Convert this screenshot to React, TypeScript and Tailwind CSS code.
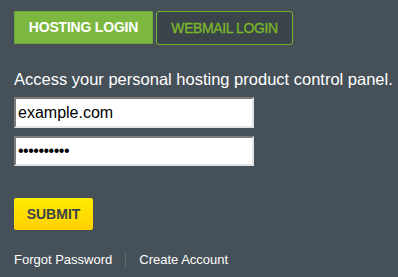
export default function App() {
  return (
    <div
      className="w-[398px] h-[277px] bg-[#465058] px-[14px] pt-[11px]"
      style={{ fontFamily: '"Liberation Sans", Arial, sans-serif' }}
    >
      {/* Tabs */}
      <div className="flex gap-[3px]">
        <button className="w-[139px] h-[33px] bg-[#7cb83f] border border-[#6fa836] rounded-[1px] text-white font-bold text-[14px] tracking-[-0.2px]">
          HOSTING LOGIN
        </button>
        <button className="w-[137px] h-[34px] bg-[#3b444b] border border-[#72b52a] rounded-[3px] text-[#7ab829] text-[14px] tracking-[-0.4px] [-webkit-text-stroke:0.3px_#7ab829]">
          WEBMAIL LOGIN
        </button>
      </div>

      <p className="mt-[24px] text-[16.5px] leading-[20px] text-white whitespace-nowrap">
        Access your personal hosting product control panel.
      </p>

      {/* Fields */}
      <div className="mt-[8px] flex flex-col gap-[8px]">
        <input
          defaultValue="example.com"
          className="w-[240px] h-[31px] bg-white border-2 border-t-[#7b7b7b] border-l-[#7b7b7b] border-b-[#e4e4e4] border-r-[#e4e4e4] px-[2px] text-[16px] text-black outline-none"
        />
        <input
          type="password"
          defaultValue="abcdefghij"
          className="w-[240px] h-[30px] bg-white border-2 border-t-[#7b7b7b] border-l-[#7b7b7b] border-b-[#e4e4e4] border-r-[#e4e4e4] px-[2px] text-[16px] tracking-[-0.5px] text-black outline-none"
        />
      </div>

      <button className="mt-[32px] w-[79px] h-[32px] rounded-[2px] bg-gradient-to-b from-[#ffec00] to-[#ffd000] text-[#3a424b] font-bold text-[14px]">
        SUBMIT
      </button>

      {/* Links */}
      <div className="mt-[20px] flex items-center text-[13px] text-white">
        <a className="pr-[13px]">Forgot Password</a>
        <span className="w-px h-[16px] bg-[#5d676e]" />
        <a className="pl-[13px]">Create Account</a>
      </div>
    </div>
  );
}
